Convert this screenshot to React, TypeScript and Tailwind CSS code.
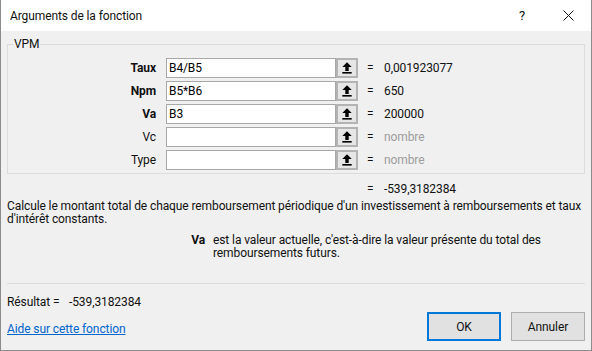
import React from 'react';

type Arg = { label: string; bold: boolean; value: string; result: string; placeholder?: boolean };

const args: Arg[] = [
  { label: 'Taux', bold: true, value: 'B4/B5', result: '0,001923077' },
  { label: 'Npm', bold: true, value: 'B5*B6', result: '650' },
  { label: 'Va', bold: true, value: 'B3', result: '200000' },
  { label: 'Vc', bold: false, value: '', result: 'nombre', placeholder: true },
  { label: 'Type', bold: false, value: '', result: 'nombre', placeholder: true },
];

// petite flèche "réduire la boîte de dialogue"
const CollapseIcon = () => (
  <svg width="10" height="12" viewBox="0 0 10 12" className="block">
    <path d="M5 0.3 L9.7 5 L6.7 5 L6.7 9 L3.3 9 L3.3 5 L0.3 5 Z" fill="#000" />
    <rect x="0.3" y="10" width="9.4" height="1.6" fill="#000" />
  </svg>
);

const ArgRow = ({ a }: { a: Arg }) => (
  <div className="flex items-center h-[20px]">
    <div className={`w-[149px] text-right pr-[1px] ${a.bold ? 'font-bold' : ''}`}>{a.label}</div>
    <div className="ml-[9px] w-[170px] h-[20px] border border-[#a8a8a8] bg-white px-[2px] leading-[18px] text-[#000]">
      {a.value}
    </div>
    <div className="w-[22px] h-[20px] border-2 border-[#b3b3b3] bg-[#e6e6e6] flex items-center justify-center">
      <CollapseIcon />
    </div>
    <span className="ml-[9px] w-[17px]">=</span>
    <span className={a.placeholder ? 'text-[#9d9d9d]' : ''}>{a.result}</span>
  </div>
);

export default function App() {
  return (
    <div className="w-[592px] h-[351px] bg-[#f0f0f0] border-x border-b border-[#8c8c8c] font-['Segoe_UI','Roboto',sans-serif] text-[12px] tracking-[-0.1px] text-[#111] overflow-hidden flex flex-col">
      {/* barre de titre */}
      <div className="h-[31px] bg-white flex items-center shrink-0">
        <span className="ml-[9px] flex-1 text-[12px]">Arguments de la fonction</span>
        <span className="w-[46px] text-center text-[13px]">?</span>
        <span className="w-[46px] flex justify-center">
          <svg width="11" height="11" viewBox="0 0 11 11">
            <path d="M0.5 0.5 L10.5 10.5 M10.5 0.5 L0.5 10.5" stroke="#111" strokeWidth="1" />
          </svg>
        </span>
      </div>

      <div className="flex flex-col px-[6px] flex-1">
        <fieldset className="mt-[5px] border border-[#dcdcdc] pt-[6px] pb-[3px] flex flex-col gap-[3px]">
          <legend className="ml-[5px] px-[1px] leading-[16px]">VPM</legend>
          {args.map((a) => (
            <ArgRow key={a.label} a={a} />
          ))}
        </fieldset>

        <div className="mt-[7px] pl-[360px] leading-[16px] flex">
          <span className="w-[17px]">=</span>
          <span>-539,3182384</span>
        </div>

        <p className="mt-[3px] leading-[13px] whitespace-nowrap">
          Calcule le montant total de chaque remboursement périodique d'un investissement à remboursements et taux
          <br />
          d'intérêt constants.
        </p>

        <div className="mt-[8px] flex leading-[13px]">
          <span className="w-[198px] text-right font-bold">Va</span>
          <p className="ml-[8px] whitespace-nowrap">
            est la valeur actuelle, c'est-à-dire la valeur présente du total des
            <br />
            remboursements futurs.
          </p>
        </div>

        <div className="mt-[23px] border-t border-[#dcdcdc] w-[578px]" />

        <div className="mt-[10px] flex leading-[16px]">
          <span className="w-[62px]">Résultat =</span>
          <span>-539,3182384</span>
        </div>

        <div className="mt-[2px] flex items-end">
          <a className="text-[#0066cc] underline mb-[3px] flex-1" href="#">
            Aide sur cette fonction
          </a>
          <button className="w-[74px] h-[29px] border-2 border-[#0078d7] bg-[#e1e1e1]">OK</button>
          <button className="ml-[10px] w-[74px] h-[29px] border border-[#adadad] bg-[#e1e1e1]">Annuler</button>
        </div>
      </div>
    </div>
  );
}
